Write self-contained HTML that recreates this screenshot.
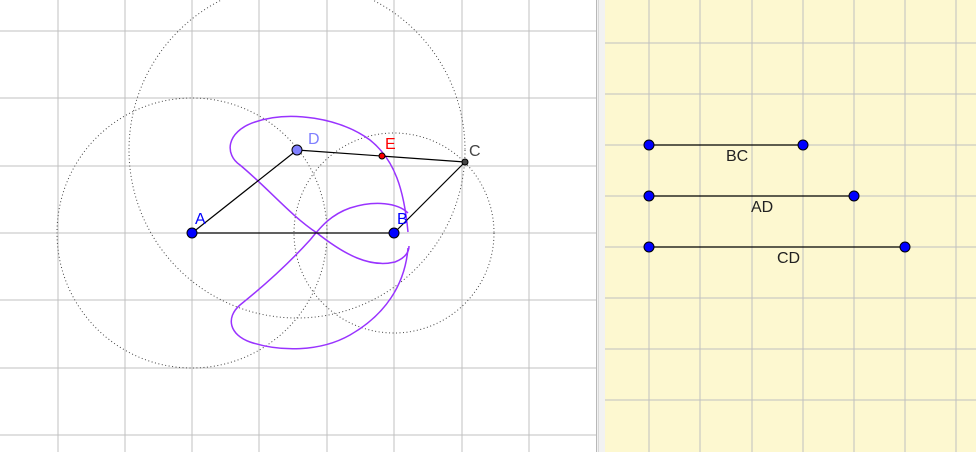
<!DOCTYPE html>
<html><head><meta charset="utf-8"><style>
html,body{margin:0;padding:0;width:976px;height:452px;overflow:hidden;background:#fff}
svg{display:block}
text{font-family:"Liberation Sans",sans-serif;font-size:16px}
</style></head><body>
<svg width="976" height="452" viewBox="0 0 976 452">
<rect x="0" y="0" width="597" height="452" fill="#fff"/>
<g stroke="#c0c0c0" stroke-width="1">
<line x1="58" y1="0" x2="58" y2="452"/><line x1="125" y1="0" x2="125" y2="452"/><line x1="192" y1="0" x2="192" y2="452"/><line x1="259" y1="0" x2="259" y2="452"/><line x1="327" y1="0" x2="327" y2="452"/><line x1="394" y1="0" x2="394" y2="452"/><line x1="462" y1="0" x2="462" y2="452"/><line x1="529" y1="0" x2="529" y2="452"/>
<line x1="0" y1="31" x2="597" y2="31"/><line x1="0" y1="98" x2="597" y2="98"/><line x1="0" y1="166" x2="597" y2="166"/><line x1="0" y1="233" x2="597" y2="233"/><line x1="0" y1="300" x2="597" y2="300"/><line x1="0" y1="368" x2="597" y2="368"/><line x1="0" y1="435" x2="597" y2="435"/>
</g>
<rect x="596" y="0" width="10" height="452" fill="#f2f2f2"/>
<line x1="596.5" y1="0" x2="596.5" y2="452" stroke="#b8b8b8"/>
<line x1="598.5" y1="0" x2="598.5" y2="452" stroke="#d8d8d8"/>
<rect x="605" y="0" width="371" height="452" fill="#fdf8d0"/>
<g stroke="#c0c0c0" stroke-width="1">
<line x1="649" y1="0" x2="649" y2="452"/><line x1="700" y1="0" x2="700" y2="452"/><line x1="752" y1="0" x2="752" y2="452"/><line x1="803" y1="0" x2="803" y2="452"/><line x1="854" y1="0" x2="854" y2="452"/><line x1="905" y1="0" x2="905" y2="452"/><line x1="956" y1="0" x2="956" y2="452"/>
<line x1="605" y1="43" x2="976" y2="43"/><line x1="605" y1="94" x2="976" y2="94"/><line x1="605" y1="145" x2="976" y2="145"/><line x1="605" y1="196" x2="976" y2="196"/><line x1="605" y1="247" x2="976" y2="247"/><line x1="605" y1="298" x2="976" y2="298"/><line x1="605" y1="349" x2="976" y2="349"/><line x1="605" y1="400" x2="976" y2="400"/>
</g>
<g fill="none" stroke="#444" stroke-width="1" stroke-dasharray="1 2.5">
<circle cx="192" cy="233" r="135"/>
<circle cx="297" cy="150" r="168"/>
<circle cx="394" cy="233" r="100"/>
</g>
<g fill="none" stroke="#9933ff" stroke-width="1.5">
<path d="M408,232 C404,190 395,160 370,140 C340,118 290,110 255,122 C225,132 225,155 240,165 C270,190 290,215 317,233 C345,255 370,268 395,262 C405,258 409,252 409,246"/>
<path d="M408,213 C398,203 375,200 350,208 C330,215 320,228 310,240 C290,262 265,285 240,305 C225,318 230,335 250,342 C280,352 320,352 350,335 C385,315 405,285 408,248"/>
</g>
<g stroke="#000" stroke-width="1.2">
<line x1="192" y1="233" x2="394" y2="233"/>
<line x1="192" y1="233" x2="297" y2="150"/>
<line x1="297" y1="150" x2="465" y2="162"/>
<line x1="394" y1="233" x2="465" y2="162"/>
<line x1="649" y1="145" x2="803" y2="145"/>
<line x1="649" y1="196" x2="854" y2="196"/>
<line x1="649" y1="247" x2="905" y2="247"/>
</g>
<g stroke="#000" stroke-width="1">
<circle cx="192" cy="233" r="5" fill="#0000ff"/>
<circle cx="394" cy="233" r="5" fill="#0000ff"/>
<circle cx="297" cy="150" r="5" fill="#8080ff"/>
<circle cx="382" cy="156" r="3" fill="#ff0000"/>
<circle cx="465" cy="162" r="3" fill="#444"/>
<circle cx="649" cy="145" r="5" fill="#0000ff"/>
<circle cx="803" cy="145" r="5" fill="#0000ff"/>
<circle cx="649" cy="196" r="5" fill="#0000ff"/>
<circle cx="854" cy="196" r="5" fill="#0000ff"/>
<circle cx="649" cy="247" r="5" fill="#0000ff"/>
<circle cx="905" cy="247" r="5" fill="#0000ff"/>
</g>
<text x="195" y="224" fill="#0000ff">A</text>
<text x="397" y="224" fill="#0000ff">B</text>
<text x="469" y="156" fill="#444">C</text>
<text x="308" y="144" fill="#8080ff">D</text>
<text x="385" y="149" fill="#ff0000">E</text>
<text x="726" y="161" fill="#222" font-size="15">BC</text>
<text x="751" y="212" fill="#222" font-size="15">AD</text>
<text x="777" y="263" fill="#222" font-size="15">CD</text>
</svg>
</body></html>
